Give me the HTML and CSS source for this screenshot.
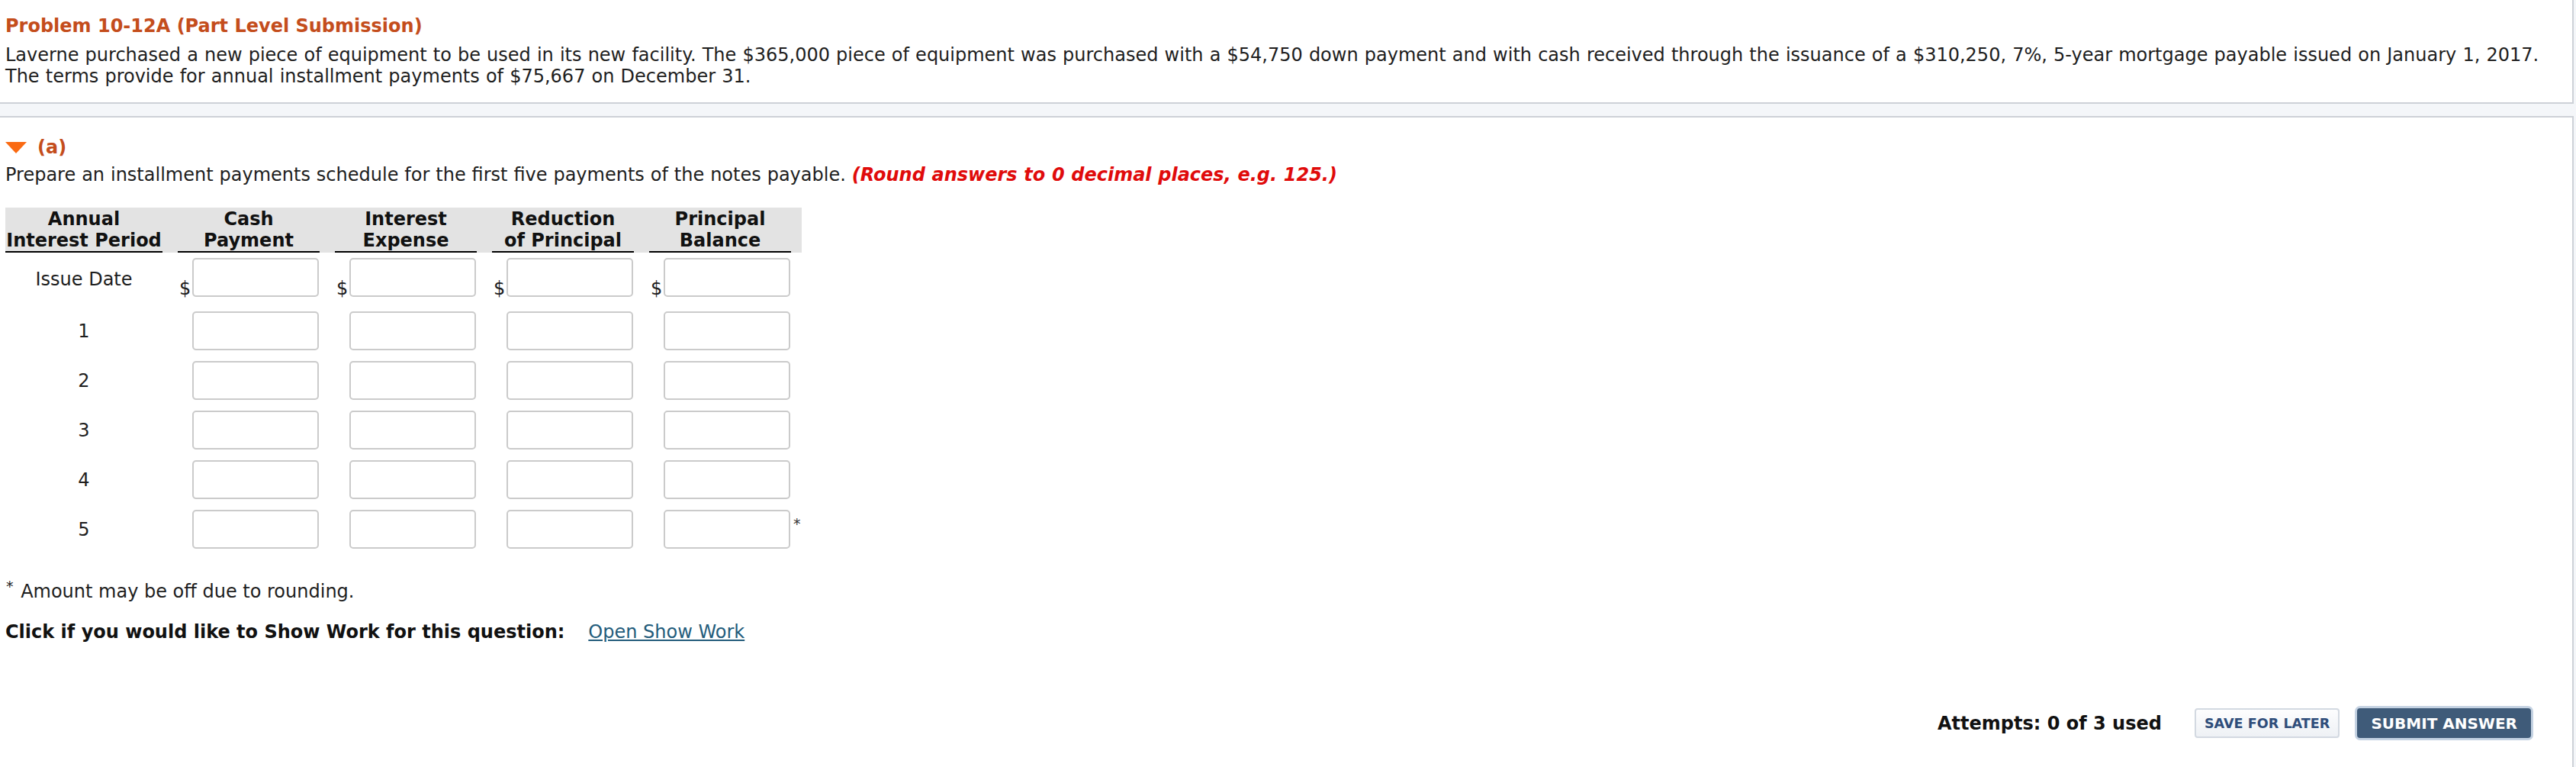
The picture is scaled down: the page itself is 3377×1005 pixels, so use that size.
FILE: index.html
```html
<!DOCTYPE html>
<html lang="en">
<head>
<meta charset="utf-8">
<title>Problem 10-12A</title>
<link rel="stylesheet" href="styles.css">
</head>
<body>
<div class="page">
  <section class="card intro">
    <h1 class="title">Problem 10-12A (Part Level Submission)</h1>
    <p class="statement">Laverne purchased a new piece of equipment to be used in its new facility. The $365,000 piece of equipment was purchased with a $54,750 down payment and with cash received through the issuance of a $310,250, 7%, 5-year mortgage payable issued on January 1, 2017.<br>The terms provide for annual installment payments of $75,667 on December 31.</p>
  </section>

  <section class="card part">
    <div class="part-head"><span class="caret"></span><span class="part-label">(a)</span></div>
    <p class="prompt">Prepare an installment payments schedule for the first five payments of the notes payable. <em class="hint">(Round answers to 0 decimal places, e.g. 125.)</em></p>

    <div class="schedule">
      <div class="sched-row sched-head">
        <div class="hcell first"><div class="hline">Annual<br>Interest Period</div></div>
        <div class="hcell"><div class="hline">Cash<br>Payment</div></div>
        <div class="hcell"><div class="hline">Interest<br>Expense</div></div>
        <div class="hcell"><div class="hline">Reduction<br>of Principal</div></div>
        <div class="hcell"><div class="hline">Principal<br>Balance</div></div>
        <div class="hcell end"></div>
      </div>

      <div class="sched-body">
        <div class="sched-row data issue">
          <div class="label">Issue Date</div>
          <div class="dcell"><span class="cur">$</span><input class="amt" type="text"></div>
          <div class="dcell"><span class="cur">$</span><input class="amt" type="text"></div>
          <div class="dcell"><span class="cur">$</span><input class="amt" type="text"></div>
          <div class="dcell"><span class="cur">$</span><input class="amt" type="text"></div>
          <div class="mark"></div>
        </div>
        <div class="sched-row data">
          <div class="label">1</div>
          <div class="dcell"><span class="cur"></span><input class="amt" type="text"></div>
          <div class="dcell"><span class="cur"></span><input class="amt" type="text"></div>
          <div class="dcell"><span class="cur"></span><input class="amt" type="text"></div>
          <div class="dcell"><span class="cur"></span><input class="amt" type="text"></div>
          <div class="mark"></div>
        </div>
        <div class="sched-row data">
          <div class="label">2</div>
          <div class="dcell"><span class="cur"></span><input class="amt" type="text"></div>
          <div class="dcell"><span class="cur"></span><input class="amt" type="text"></div>
          <div class="dcell"><span class="cur"></span><input class="amt" type="text"></div>
          <div class="dcell"><span class="cur"></span><input class="amt" type="text"></div>
          <div class="mark"></div>
        </div>
        <div class="sched-row data">
          <div class="label">3</div>
          <div class="dcell"><span class="cur"></span><input class="amt" type="text"></div>
          <div class="dcell"><span class="cur"></span><input class="amt" type="text"></div>
          <div class="dcell"><span class="cur"></span><input class="amt" type="text"></div>
          <div class="dcell"><span class="cur"></span><input class="amt" type="text"></div>
          <div class="mark"></div>
        </div>
        <div class="sched-row data">
          <div class="label">4</div>
          <div class="dcell"><span class="cur"></span><input class="amt" type="text"></div>
          <div class="dcell"><span class="cur"></span><input class="amt" type="text"></div>
          <div class="dcell"><span class="cur"></span><input class="amt" type="text"></div>
          <div class="dcell"><span class="cur"></span><input class="amt" type="text"></div>
          <div class="mark"></div>
        </div>
        <div class="sched-row data">
          <div class="label">5</div>
          <div class="dcell"><span class="cur"></span><input class="amt" type="text"></div>
          <div class="dcell"><span class="cur"></span><input class="amt" type="text"></div>
          <div class="dcell"><span class="cur"></span><input class="amt" type="text"></div>
          <div class="dcell"><span class="cur"></span><input class="amt" type="text"></div>
          <div class="mark">*</div>
        </div>
      </div>
    </div>

    <p class="footnote"><sup class="fn-star">*</sup> Amount may be off due to rounding.</p>
    <p class="showwork"><span class="sw-label">Click if you would like to Show Work for this question:</span><a class="sw-link" href="#">Open Show Work</a></p>

    <div class="actions">
      <span class="attempts">Attempts: 0 of 3 used</span>
      <button class="btn btn-save" type="button">SAVE FOR LATER</button>
      <button class="btn btn-submit" type="button">SUBMIT ANSWER</button>
    </div>
  </section>
</div>
</body>
</html>
```

FILE: styles.css
```css
html, body {
  margin: 0;
  padding: 0;
}

body {
  background: #f4f6f9;
  font-family: "DejaVu Sans", Verdana, sans-serif;
  font-size: 24px;
  line-height: 28px;
  color: #1e1e1e;
  overflow: hidden;
}

.page {
  width: 3377px;
}

.card {
  background: #ffffff;
  margin-right: 3px;
  border-right: 2px solid #cdd1d7;
}

.intro {
  padding: 20px 8px 20px 7px;
  border-bottom: 2px solid #cdd1d7;
}

.title {
  margin: 0 0 10px 0;
  font-size: 24px;
  line-height: 28px;
  font-weight: bold;
  color: #c44d1c;
}

.statement {
  margin: 0;
  white-space: nowrap;
  word-spacing: 0.5px;
}

.part {
  margin-top: 16px;
  border-top: 2px solid #cdd1d7;
  padding: 25px 54px 300px 7px;
}

.part-head {
  display: flex;
  align-items: center;
  gap: 14px;
  height: 28px;
}

.caret {
  width: 0;
  height: 0;
  border-left: 14.5px solid transparent;
  border-right: 14.5px solid transparent;
  border-top: 15px solid #fa6a12;
}

.part-label {
  font-weight: bold;
  color: #c44d1c;
}

.prompt {
  margin: 8px 0 0 0;
  word-spacing: 0.3px;
}

.hint {
  font-weight: bold;
  font-style: italic;
  color: #e00b0b;
}

/* schedule table */
.schedule {
  margin-top: 29px;
  width: 1044px;
}

.sched-row {
  display: grid;
  grid-template-columns: 206px repeat(4, 206px) 14px;
}

.sched-head {
  background: #e3e3e3;
  padding-top: 1px;
  font-weight: bold;
  text-align: center;
  color: #111;
}

.hcell {
  padding-left: 20px;
}

.hcell.first {
  padding-left: 0;
}

.hline {
  border-bottom: 2px solid #000;
}

.sched-body {
  margin-top: 7px;
  display: flex;
  flex-direction: column;
  gap: 14px;
}

.data {
  align-items: center;
  height: 51px;
}

.data.issue {
  height: 56px;
}

.label {
  text-align: center;
}

.dcell {
  display: flex;
  align-items: flex-end;
  padding-left: 20px;
  align-self: start;
}

.cur {
  width: 19px;
  line-height: 21px;
  padding-left: 2px;
  box-sizing: border-box;
}

.amt {
  box-sizing: border-box;
  width: 166px;
  height: 51px;
  margin: 0;
  border: 2px solid #cbcbcb;
  border-radius: 5px;
  background: #fff;
  font-family: "DejaVu Sans", Verdana, sans-serif;
  font-size: 20px;
  padding: 0 6px;
}

.mark {
  align-self: start;
  padding-left: 3px;
  padding-top: 9px;
  font-size: 19px;
  line-height: 19px;
  color: #333;
}

.footnote {
  margin: 42px 0 0 0;
}

.fn-star {
  font-size: 19px;
  line-height: 0;
  vertical-align: 8px;
  margin-left: 1px;
  margin-right: 2px;
}

.showwork {
  margin: 25px 0 0 0;
}

.sw-label {
  font-weight: bold;
  color: #111;
}

.sw-link {
  margin-left: 31px;
  color: #235c7b;
  text-decoration: underline;
}

.actions {
  margin-top: 86px;
  display: flex;
  justify-content: flex-end;
  align-items: center;
  height: 39px;
}

.attempts {
  font-weight: bold;
  color: #111;
  margin-right: 43px;
}

.btn {
  box-sizing: border-box;
  height: 39px;
  border-radius: 4px;
  font-family: "DejaVu Sans", Verdana, sans-serif;
  font-weight: bold;
  cursor: pointer;
}

.btn-save {
  padding: 0 11px;
  font-size: 17.6px;
  color: #2f4d7a;
  background: linear-gradient(#fdfdfe, #eef1f5);
  border: 2px solid #d3d9e1;
  margin-right: 23px;
}

.btn-submit {
  padding: 0 18px;
  font-size: 20px;
  color: #ffffff;
  background: #3f5b79;
  border: none;
  box-shadow: 0 0 0 3px #c4d2e2;
}
```
